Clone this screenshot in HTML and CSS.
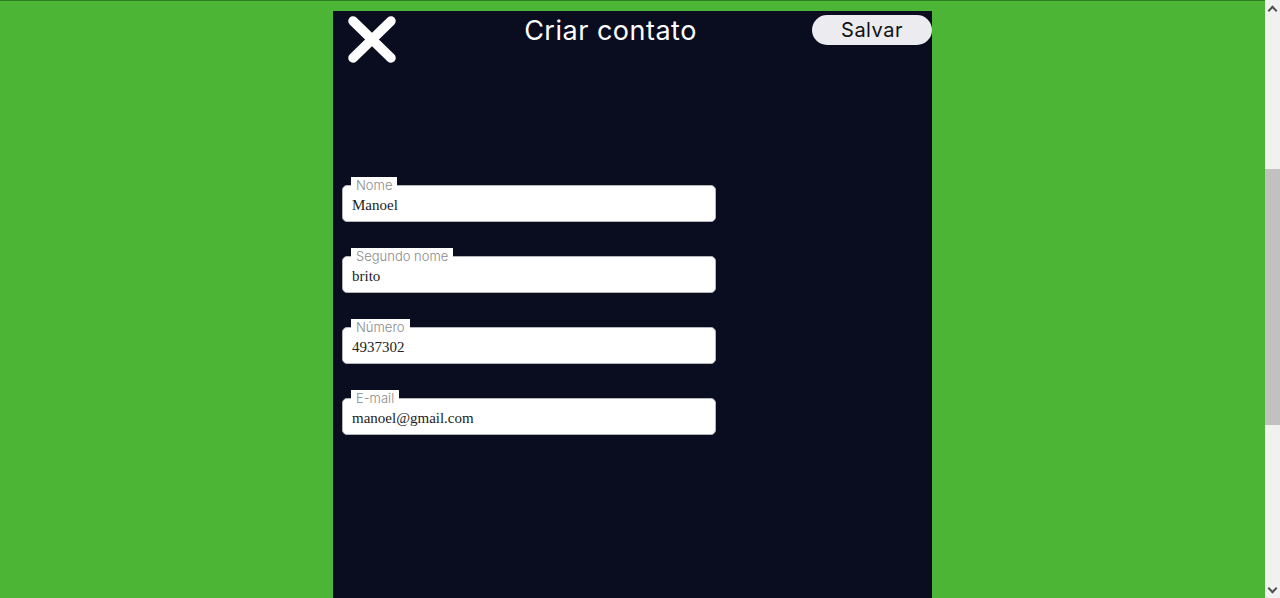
FILE: index.html
```html
<!DOCTYPE html>
<html lang="pt">
<head>
<meta charset="utf-8">
<title>Criar contato</title>
<link rel="stylesheet" href="styles.css">
</head>
<body>
<div class="page">
  <main class="panel">
    <header class="top">
      <button class="close" aria-label="Fechar">
        <svg width="50" height="49" viewBox="0 0 50 49"><path d="M6 6 L44 43 M44 6 L6 43" stroke="#fff" stroke-width="9.5" stroke-linecap="round" fill="none"/></svg>
      </button>
      <h1 class="title">Criar contato</h1>
      <button class="save">Salvar</button>
    </header>
    <form class="form">
      <div class="field">
        <label class="label">Nome</label>
        <input class="input" value="Manoel">
      </div>
      <div class="field">
        <label class="label">Segundo nome</label>
        <input class="input" value="brito">
      </div>
      <div class="field">
        <label class="label">Número</label>
        <input class="input" value="4937302">
      </div>
      <div class="field">
        <label class="label">E-mail</label>
        <input class="input" value="manoel@gmail.com">
      </div>
    </form>
  </main>
</div>
<div class="scrollbar">
  <span class="arrow up"></span>
  <span class="thumb"></span>
  <span class="arrow down"></span>
</div>
</body>
</html>
```
FILE: styles.css
```css
html, body {
  margin: 0;
  height: 100%;
  overflow: hidden;
}
body {
  background: #4cb536;
  border-top: 1px solid #2f7d22;
  box-sizing: border-box;
  font-family: "Inter", "Liberation Sans", sans-serif;
}
.page {
  margin-right: 15px;
  padding-top: 10px;
}
.panel {
  width: 599px;
  height: 600px;
  margin: 0 auto;
  background: #0a0c20;
  box-sizing: border-box;
}
.top {
  display: flex;
  align-items: flex-start;
  justify-content: space-between;
  padding-left: 14px;
  height: 166px;
}
.close {
  border: 0;
  background: none;
  padding: 0;
  margin-top: 4px;
  width: 50px;
  height: 49px;
  display: block;
}
.close svg { display: block; }
.title {
  margin: 3px 0 0 12px;
  font-weight: 400;
  font-size: 27px;
  line-height: 34px;
  color: #fff;
  letter-spacing: 0.5px;
}
.save {
  margin-top: 4px;
  width: 120px;
  height: 30px;
  border: 0;
  border-radius: 15px;
  background: #ebebf0;
  color: #111;
  font-family: "Inter", "Liberation Sans", sans-serif;
  font-size: 20px;
  letter-spacing: 0.5px;
  padding: 0;
}
.form {
  display: flex;
  flex-direction: column;
  gap: 26px;
  padding-left: 9px;
}
.field {
  display: flex;
  flex-direction: column;
  align-items: flex-start;
}
.label {
  position: relative;
  z-index: 1;
  margin: 0 0 -7px 9px;
  padding: 0 5px;
  height: 15px;
  line-height: 17px;
  background: #fff;
  color: #8a8a8a;
  font-size: 13px;
  font-weight: 300;
}
.input {
  width: 374px;
  height: 37px;
  box-sizing: border-box;
  border: 1px solid #b4b4bc;
  border-radius: 5px;
  background: #fff;
  padding: 3px 9px 0;
  font-family: "Liberation Serif", serif;
  font-size: 15px;
  color: #222;
}
.scrollbar {
  position: fixed;
  top: 0;
  right: 0;
  width: 15px;
  height: 100%;
  background: #f1f1f1;
}
.thumb {
  position: absolute;
  left: 0;
  top: 169px;
  width: 15px;
  height: 256px;
  background: #c1c1c1;
}
.arrow {
  position: absolute;
  left: 4px;
  width: 5px;
  height: 5px;
  border-left: 2px solid #505050;
  border-top: 2px solid #505050;
}
.arrow.up { top: 7px; transform: rotate(45deg); }
.arrow.down { bottom: 6px; transform: rotate(225deg); }
```
